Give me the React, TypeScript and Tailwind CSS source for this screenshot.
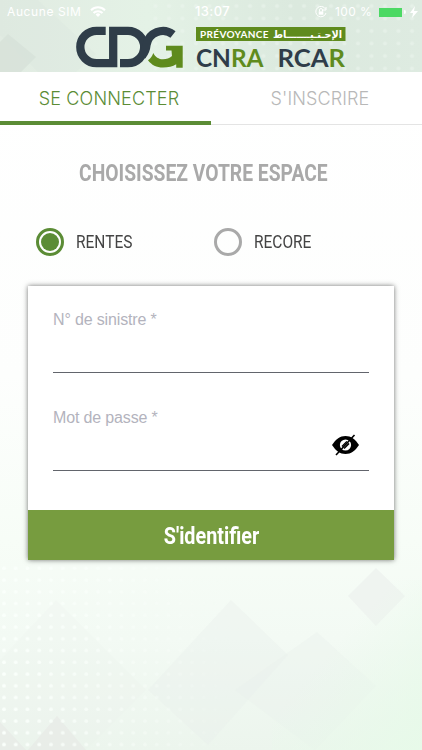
import React, { useState } from 'react';

const spaces = ['RENTES', 'RECORE'];

const Backdrop = () => (
    <svg className="absolute inset-0 w-full h-full" viewBox="0 0 422 750" aria-hidden="true">
        <defs>
            <linearGradient id="page" x1="0" y1="0" x2="0" y2="1">
                <stop offset="0.1" stopColor="#ffffff" />
                <stop offset="0.5" stopColor="#fdfefd" />
                <stop offset="0.72" stopColor="#f7fdf7" />
                <stop offset="0.85" stopColor="#f3faf4" />
                <stop offset="1" stopColor="#ecf5ed" />
            </linearGradient>
            <linearGradient id="header" x1="0" y1="0" x2="1" y2="0">
                <stop offset="0" stopColor="#e1ebe2" />
                <stop offset="0.35" stopColor="#e4f2e6" />
                <stop offset="0.7" stopColor="#dbe9de" />
                <stop offset="1" stopColor="#deebe1" />
            </linearGradient>
            <linearGradient id="fade" x1="0" y1="0" x2="1" y2="0">
                <stop offset="0" stopColor="#fff" />
                <stop offset="1" stopColor="#fff" stopOpacity="0" />
            </linearGradient>
            <linearGradient id="corner" x1="0" y1="0" x2="1" y2="1">
                <stop offset="0.4" stopColor="#e7fae9" stopOpacity="0" />
                <stop offset="1" stopColor="#e7fae9" />
            </linearGradient>
            <pattern id="dots" x="-2" y="574" width="11.75" height="11.75" patternUnits="userSpaceOnUse">
                <circle cx="6" cy="6" r="1.9" fill="#fafffb" />
            </pattern>
            <pattern id="topDots" x="0" y="-1" width="13.5" height="12.5" patternUnits="userSpaceOnUse">
                <circle cx="7" cy="7" r="2" fill="#edf6ef" />
            </pattern>
            <mask id="dotFade"><rect x="0" y="560" width="240" height="190" fill="url(#fade)" /></mask>
        </defs>
        <rect width="422" height="750" fill="url(#page)" />
        <path d="m231 600 57 55-80 90-60-55Z" fill="#e9eeec" opacity="0.35" />
        <path d="m317 632 59 54-61 64-80-60Z" fill="#e8eeea" opacity="0.3" />
        <path d="m376 568 29 28-29 30-28-30Z" fill="#edf1ee" opacity="0.7" />
        <rect x="272" y="580" width="150" height="170" fill="url(#corner)" />
        <path d="m56 600 90 90-60 60H0v-90Z" fill="#e9f1eb" opacity="0.2" />
        <path d="m57 716 29 34H28ZM0 722l26 28H0Z" fill="#e5e6e4" opacity="0.5" />
        <rect y="560" width="240" height="190" fill="url(#dots)" mask="url(#dotFade)" />
        <rect width="422" height="72" fill="url(#header)" />
        <path d="m8 34 28 23-15 15H0V42Z" fill="#d3ddd5" opacity="0.6" />
        <path d="M38 0 96 54 76 72H38L0 35V0Z" fill="#d9e2da" opacity="0.25" />
        <rect x="145" width="277" height="72" fill="url(#topDots)" opacity="0.5" />
    </svg>
);

const StatusBar = () => (
    <div className="relative flex h-6 items-center pl-[7px] pr-1 text-[12px] text-white font-['Inter']">
        <span className="w-[83px] whitespace-nowrap tracking-[0.6px]">Aucune SIM</span>
        <svg className="w-4 h-3" viewBox="0 0 16 12" fill="none" stroke="white" strokeWidth="2">
            <path d="M1 4.2a10 10 0 0 1 14 0M3.5 7a6.4 6.4 0 0 1 9 0" />
            <path d="m8 11 2.4-2.5a3.4 3.4 0 0 0-4.8 0Z" fill="white" stroke="none" />
        </svg>
        <span className="ml-[89px] text-[13px] font-medium tracking-[0.4px]">13:07</span>
        <svg className="ml-auto w-3 h-3" viewBox="0 0 12 12" fill="none" stroke="white">
            <path d="M10.5 3A5.2 5.2 0 1 0 11 7M11 1v3H8M4.5 5.5V4a1.5 1.5 0 0 1 3 0v1.5" />
            <path d="M3.7 5.4h4.6v3.3H3.7Z" fill="white" stroke="none" />
        </svg>
        <span className="ml-2 w-[40px] whitespace-nowrap tracking-[0.4px]">100 %</span>
        <span className="ml-1 h-[9px] w-[23px] bg-[#4cd964]" />
        <span className="ml-[2px] h-1 w-[2px] rounded-r bg-white" />
        <svg className="ml-[4px] w-2 h-3" viewBox="0 0 8 12"><path d="M5 0 0 7h3l-1 5 6-7H4Z" fill="white" /></svg>
    </div>
);

const Logo = () => (
    <svg className="absolute left-[76px] top-[22px] h-[54px] w-[272px]" viewBox="76 22 272 54">
        <g fill="none" stroke="#2f3d49" strokeWidth="8.3">
            <path d="M105.700 30.800H96.500a16.200 16.200 0 0 0 0 32.400H113.200V30.800H128a16.200 16.200 0 0 1 0 32.400H120" />
            <path d="M173 34.500A16.500 16.500 0 0 0 146.500 45q-.5 6-4.500 11" />
        </g>
        <path d="M166 45.700h16.700v22.100h-6.500v-3.500c-3.500 2.200-8 3.300-13.200 3.300-6.500 0-11.500-2.600-15-7.300 2.700-2 4.400-4.500 5.300-7.300 2 4 5.500 6.300 9.700 6.300 3.500 0 6.500-1 9-3.200l-.5-5.600H166Z" fill="#5f8b1d" />
        <rect x="196" y="27" width="149.5" height="14" fill="#5f8b1d" />
        <text x="200" y="37.8" fontSize="10" fontWeight="700" textLength="68.5" fill="white" fontFamily="Lato">PRÉVOYANCE</text>
        <text x="273" y="38" fontSize="10" fontWeight="700" textLength="69" lengthAdjust="spacingAndGlyphs" fill="white" fontFamily="DejaVu Sans">الإحـتـيـــــــاط</text>
        <g fontFamily="Lato" fontWeight="700" fontSize="24" fill="#2f3d49">
            <text x="196" y="66.500" textLength="67.500" lengthAdjust="spacingAndGlyphs">CN<tspan fill="#5f8b1d">RA</tspan></text>
            <text x="277.500" y="66.500" textLength="67.500" lengthAdjust="spacingAndGlyphs">RCA<tspan fill="#5f8b1d">R</tspan></text>
        </g>
    </svg>
);

const EyeOff = () => (
    <svg className="absolute right-[9px] top-[25px] h-6 w-[29px]" viewBox="0 0 29 24">
        <path d="M1 12C5 6 9 3 14.5 3S24 6 28 12c-4 6-8 9-13.5 9S5 18 1 12Z" />
        <circle cx="14.5" cy="12" r="5.6" fill="white" />
        <path d="m12 14.500 5-5" stroke="black" strokeWidth="4.500" />
        <path d="m12 14.500 5-5.300" stroke="white" strokeWidth="1.500" />
        <path d="m5 22 18.500-20" stroke="black" strokeWidth="1.600" />
    </svg>
);

export default function App() {
    const [space, setSpace] = useState('RENTES');

    return (
        <main className="relative h-[750px] w-[422px] overflow-hidden font-['Roboto',sans-serif]">
            <Backdrop />
            <header className="relative z-10 h-[72px]">
                <StatusBar />
                <Logo />
            </header>

            <nav className="relative grid h-[53px] grid-cols-2 bg-white font-['Inter',sans-serif] text-[18px] font-light">
                <button className="border-b-4 border-[#5b8c35] pt-[3px] pl-[7px] text-[#5b8c35]">
                    <span className="inline-block whitespace-nowrap tracking-[0.15px]">SE CONNECTER</span>
                </button>
                <button className="border-b border-[#e4e4e4] pl-[7px] text-[#b8b8b8]">
                    <span className="inline-block whitespace-nowrap tracking-[0.1px]">S'INSCRIRE</span>
                </button>
            </nav>

            <h1 className="relative mt-[33px] flex h-8 items-center justify-center text-[23px] font-bold text-[#a9a9a9]">
                <span className="block -ml-4 scale-x-[0.838] whitespace-nowrap">CHOISISSEZ VOTRE ESPACE</span>
            </h1>

            <div className="relative mt-[37px] grid h-[29px] grid-cols-[177.5px_1fr] pl-9">
                {spaces.map((name) => (
                    <button key={name} onClick={() => setSpace(name)} className="flex items-center gap-[12px]">
                        <span className={`flex size-[28px] shrink-0 items-center justify-center rounded-full border-[3px] ${space === name ? 'border-[#5b8c35]' : 'border-[#a9a9a9]'}`}>
                            {space === name && <span className="size-[18px] rounded-full bg-[#5b8c35]" />}
                        </span>
                        <span className="origin-left scale-x-[0.86] text-[18px] text-[#444]">{name}</span>
                    </button>
                ))}
            </div>

            <form className="relative mx-7 mt-[30px] h-[274px] bg-white shadow-[0_0_5px_rgba(0,0,0,0.55)]">
                <div className="flex h-[224px] flex-col px-[25px] pt-[24px] font-['Liberation_Sans',sans-serif] text-[16px] tracking-[-0.15px] text-[#b3b3bd]">
                    <label className="block h-[63px] border-b border-[#62656c] leading-[20px]">N° de sinistre *</label>
                    <label className="relative mt-[35px] block h-[63px] border-b border-[#62656c] leading-[20px]">
                        Mot de passe *
                        <EyeOff />
                    </label>
                </div>
                <button type="button" className="flex h-[50px] w-full items-center justify-center bg-[#779c3f] pt-[4px] text-[23px] font-bold text-white">
                    <span className="block scale-x-[0.86]">S'identifier</span>
                </button>
            </form>
        </main>
    );
}
